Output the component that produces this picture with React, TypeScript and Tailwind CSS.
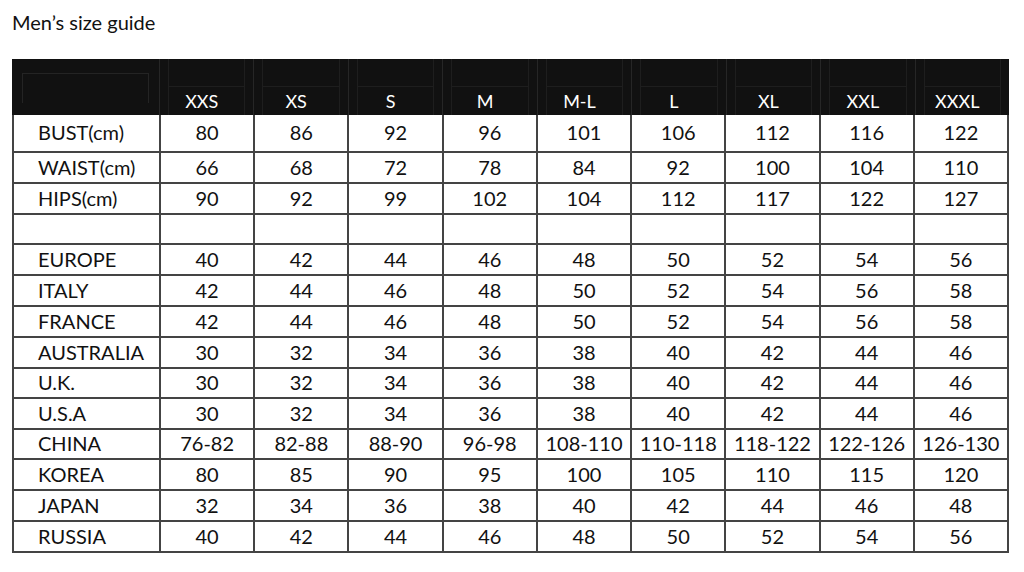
import React from "react";

const sizes = ["XXS", "XS", "S", "M", "M-L", "L", "XL", "XXL", "XXXL"];

const rows: { label: string; values: string[]; h: number }[] = [
  { label: "BUST(cm)", values: ["80", "86", "92", "96", "101", "106", "112", "116", "122"], h: 36 },
  { label: "WAIST(cm)", values: ["66", "68", "72", "78", "84", "92", "100", "104", "110"], h: 31 },
  { label: "HIPS(cm)", values: ["90", "92", "99", "102", "104", "112", "117", "122", "127"], h: 31 },
  { label: "", values: ["", "", "", "", "", "", "", "", ""], h: 30 },
  { label: "EUROPE", values: ["40", "42", "44", "46", "48", "50", "52", "54", "56"], h: 31 },
  { label: "ITALY", values: ["42", "44", "46", "48", "50", "52", "54", "56", "58"], h: 31 },
  { label: "FRANCE", values: ["42", "44", "46", "48", "50", "52", "54", "56", "58"], h: 31 },
  { label: "AUSTRALIA", values: ["30", "32", "34", "36", "38", "40", "42", "44", "46"], h: 31 },
  { label: "U.K.", values: ["30", "32", "34", "36", "38", "40", "42", "44", "46"], h: 30 },
  { label: "U.S.A", values: ["30", "32", "34", "36", "38", "40", "42", "44", "46"], h: 31 },
  { label: "CHINA", values: ["76-82", "82-88", "88-90", "96-98", "108-110", "110-118", "118-122", "122-126", "126-130"], h: 30 },
  { label: "KOREA", values: ["80", "85", "90", "95", "100", "105", "110", "115", "120"], h: 31 },
  { label: "JAPAN", values: ["32", "34", "36", "38", "40", "42", "44", "46", "48"], h: 31 },
  { label: "RUSSIA", values: ["40", "42", "44", "46", "48", "50", "52", "54", "56"], h: 31 },
];

export default function App() {
  return (
    <div
      className="w-[1024px] h-[572px] bg-white text-[#111] overflow-hidden"
      style={{ fontFamily: "Lato, 'Open Sans', sans-serif" }}
    >
      <div className="pl-[12px] pt-[9px] h-[59px] text-[20px] leading-[26px]">Men’s size guide</div>
      <div className="ml-[12px] w-[997px]">
        {/* header */}
        <div className="grid grid-cols-[147px_repeat(9,1fr)] h-[56px] bg-[#111]">
          <div className="flex flex-col pt-[14px] px-[10px] pb-[12px]">
            <div className="flex-1 border-t border-l border-r border-[#242424]" />
          </div>
          {sizes.map((s) => (
            <div key={s} className="flex flex-col border-l border-[#262626]">
              <div className="h-[28px] mx-[8px] border-b border-l border-r border-[#1e1e1e]" />
              <div className="flex-1 flex items-center justify-center pr-[10px] text-white text-[18px] leading-none mx-[8px] border-l border-r border-[#1e1e1e]">
                {s}
              </div>
            </div>
          ))}
        </div>
        {/* body */}
        <div className="border-l-2 border-r-2 border-b-2 border-[#444]">
          {rows.map((r, i) => (
            <div
              key={i}
              className={`grid grid-cols-[145px_repeat(9,1fr)] ${i > 0 ? "border-t-2 border-[#444]" : ""}`}
              style={{ height: r.h }}
            >
              <div className="flex items-center pl-[24px] pb-[2px] text-[20px] leading-none">{r.label}</div>
              {r.values.map((v, j) => (
                <div
                  key={j}
                  className="flex items-center justify-center pb-[2px] border-l-2 border-[#444] text-[20px] leading-none"
                >
                  {v}
                </div>
              ))}
            </div>
          ))}
        </div>
      </div>
    </div>
  );
}
